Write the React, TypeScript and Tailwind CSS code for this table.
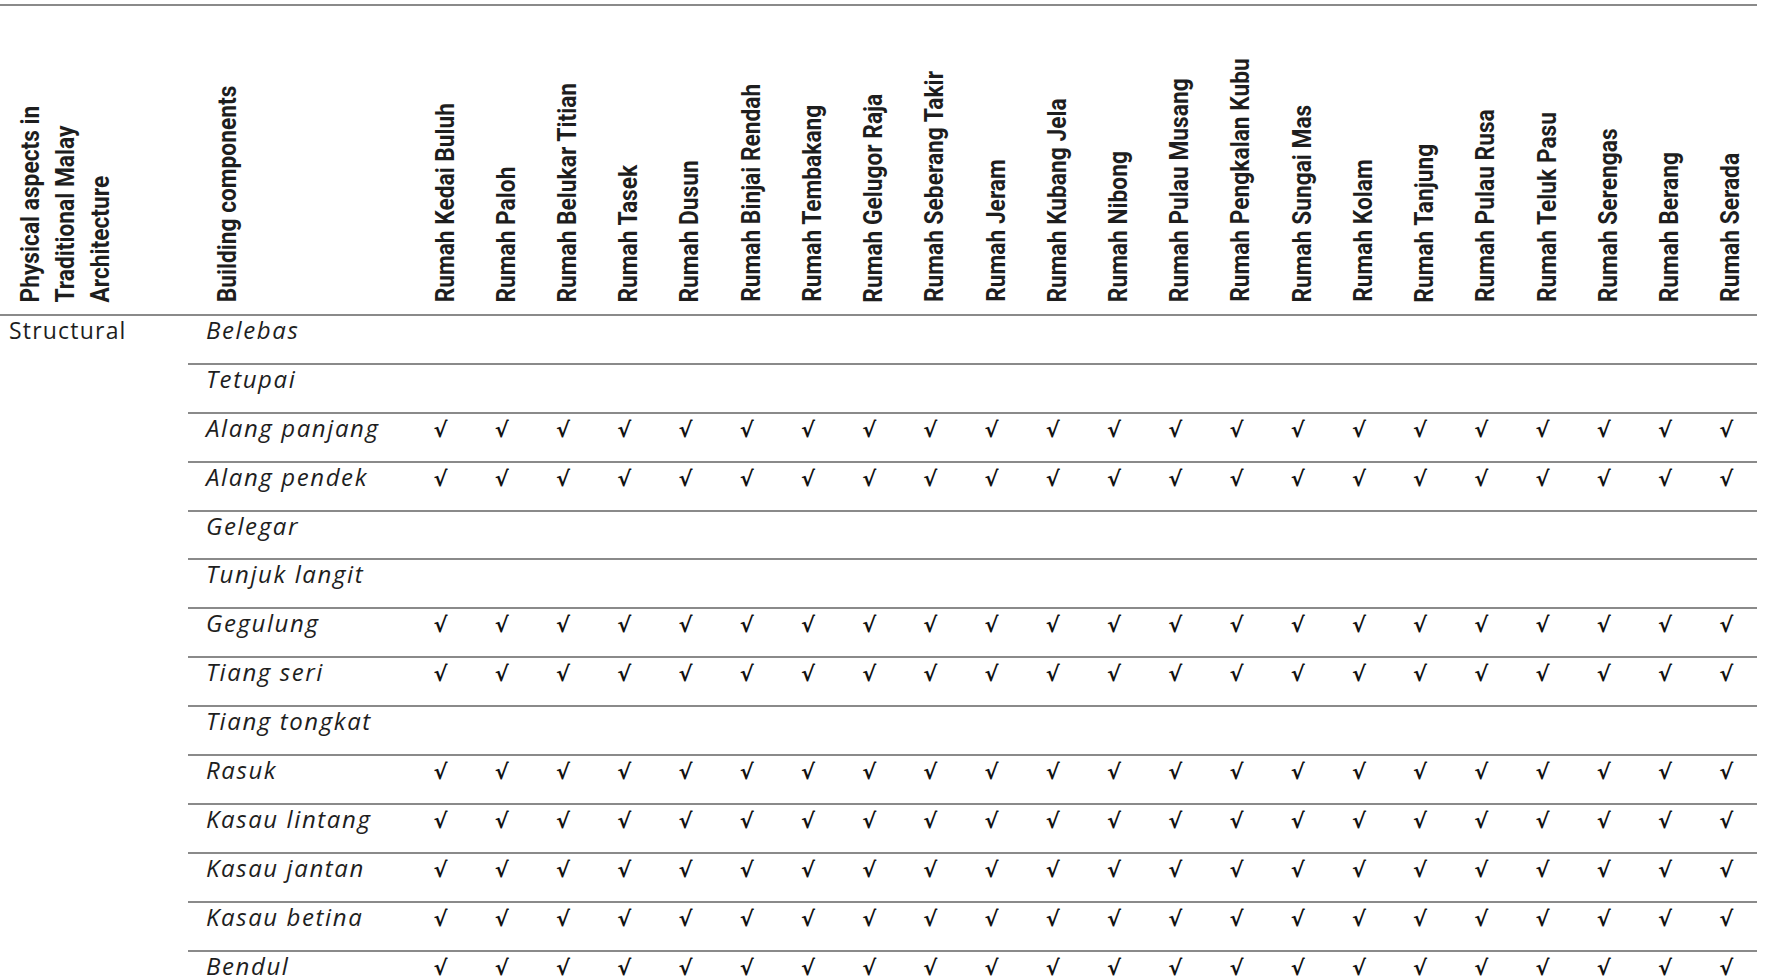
const houses = [
  'Rumah Kedai Buluh',
  'Rumah Paloh',
  'Rumah Belukar Titian',
  'Rumah Tasek',
  'Rumah Dusun',
  'Rumah Binjai Rendah',
  'Rumah Tembakang',
  'Rumah Gelugor Raja',
  'Rumah Seberang Takir',
  'Rumah Jeram',
  'Rumah Kubang Jela',
  'Rumah Nibong',
  'Rumah Pulau Musang',
  'Rumah Pengkalan Kubu',
  'Rumah Sungai Mas',
  'Rumah Kolam',
  'Rumah Tanjung',
  'Rumah Pulau Rusa',
  'Rumah Teluk Pasu',
  'Rumah Serengas',
  'Rumah Berang',
  'Rumah Serada',
];

const components = [
  { name: 'Belebas', checked: false },
  { name: 'Tetupai', checked: false },
  { name: 'Alang panjang', checked: true },
  { name: 'Alang pendek', checked: true },
  { name: 'Gelegar', checked: false },
  { name: 'Tunjuk langit', checked: false },
  { name: 'Gegulung', checked: true },
  { name: 'Tiang seri', checked: true },
  { name: 'Tiang tongkat', checked: false },
  { name: 'Rasuk', checked: true },
  { name: 'Kasau lintang', checked: true },
  { name: 'Kasau jantan', checked: true },
  { name: 'Kasau betina', checked: true },
  { name: 'Bendul', checked: true },
];

// rotated header label, squeezed along the text to look condensed
const VLabel = ({ children, leading }: { children: React.ReactNode; leading: string }) => (
  <span
    className={`font-['Roboto',sans-serif] text-[25px] font-bold text-left whitespace-nowrap [writing-mode:vertical-rl] rotate-180 ${leading}`}
  >
    {children}
  </span>
);

const App = () => {
  return (
    <div className="w-[1769px] h-[979px] overflow-hidden bg-white text-[#1e1e1e]">
      <table className="mt-1 w-[1757px] table-fixed border-collapse font-['Open_Sans',sans-serif]">
        <colgroup>
          <col className="w-[188px]" />
          <col className="w-[222px]" />
          {houses.map((h) => (
            <col key={h} />
          ))}
        </colgroup>
        <thead>
          <tr className="border-t-2 border-b-2 border-[#8a8a8a]">
            <th className="h-[310px] p-0 align-bottom font-normal">
              <div className="flex justify-start pl-[13px] pb-[13px] origin-bottom scale-y-[0.91]">
                <VLabel leading="leading-[35px]">
                  Physical aspects in
                  <br />
                  Traditional Malay
                  <br />
                  Architecture
                </VLabel>
              </div>
            </th>
            <th className="p-0 align-bottom font-normal">
              <div className="flex justify-start pl-[22px] pb-[13px] origin-bottom scale-y-[0.91]">
                <VLabel leading="leading-[35px]">Building components</VLabel>
              </div>
            </th>
            {houses.map((h) => (
              <th key={h} className="p-0 align-bottom font-normal">
                <div className="flex justify-center pl-[10px] pb-[13px] origin-bottom scale-y-[0.91]">
                  <VLabel leading="leading-[30px]">{h}</VLabel>
                </div>
              </th>
            ))}
          </tr>
        </thead>
        <tbody>
          {components.map((c, i) => (
            <tr key={c.name} className="h-[48.9px]">
              {i === 0 && (
                <td
                  rowSpan={components.length}
                  className="p-0 pl-[9px] align-top text-[23px] leading-[28px] tracking-[1.2px]"
                >
                  Structural
                </td>
              )}
              <td className="border-b-2 border-[#8a8a8a] p-0 pl-[18px] align-top text-[24px] leading-[28px] tracking-[1.6px] italic">
                {c.name}
              </td>
              {houses.map((h) => (
                <td
                  key={h}
                  className="border-b-2 border-[#8a8a8a] p-0 pt-[2px] align-top text-center text-[21px] leading-[28px] font-bold text-[#111] font-['DejaVu_Sans',sans-serif]"
                >
                  {c.checked ? '√' : ''}
                </td>
              ))}
            </tr>
          ))}
        </tbody>
      </table>
    </div>
  );
};

export default App;
